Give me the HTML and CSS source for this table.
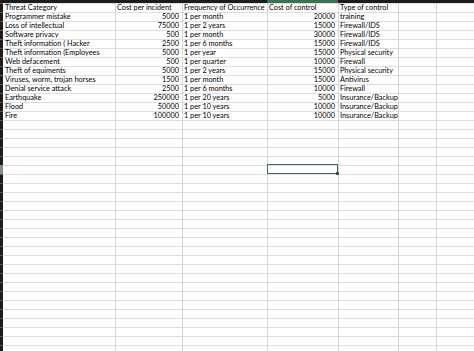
FILE: index.html
```html
<!DOCTYPE html>
<html>
<head>
<meta charset="utf-8">
<link rel="stylesheet" href="styles.css">
</head>
<body>
<div class="app">
  <div class="colheads">
    <span class="corner"></span>
    <span></span><span></span><span></span>
    <span class="hl"></span>
    <span></span><span></span><span></span>
  </div>
  <div class="body">
    <div class="rowheads"><span class="hl"></span></div>
    <div class="sheet">
      <div class="c">Threat Category</div><div class="c">Cost per incident</div><div class="c">Frequency of Occurrence</div><div class="c">Cost of control</div><div class="c">Type of control</div><div class="c"></div><div class="c"></div>
      <div class="c">Programmer mistake</div><div class="c n">5000</div><div class="c">1 per month</div><div class="c n">20000</div><div class="c">training</div><div class="c"></div><div class="c"></div>
      <div class="c">Loss of intellectual</div><div class="c n">75000</div><div class="c">1 per 2 years</div><div class="c n">15000</div><div class="c">Firewall/IDS</div><div class="c"></div><div class="c"></div>
      <div class="c">Software privacy</div><div class="c n">500</div><div class="c">1 per month</div><div class="c n">30000</div><div class="c">Firewall/IDS</div><div class="c"></div><div class="c"></div>
      <div class="c">Theft information ( Hacker</div><div class="c n">2500</div><div class="c">1 per 6 months</div><div class="c n">15000</div><div class="c">Firewall/IDS</div><div class="c"></div><div class="c"></div>
      <div class="c">Theft information (Employees</div><div class="c n">5000</div><div class="c">1 per year</div><div class="c n">15000</div><div class="c">Physical security</div><div class="c"></div><div class="c"></div>
      <div class="c">Web defacement</div><div class="c n">500</div><div class="c">1 per quarter</div><div class="c n">10000</div><div class="c">Firewall</div><div class="c"></div><div class="c"></div>
      <div class="c">Theft of equiments</div><div class="c n">5000</div><div class="c">1 per 2 years</div><div class="c n">15000</div><div class="c">Physical security</div><div class="c"></div><div class="c"></div>
      <div class="c">Viruses, worm, trojan horses</div><div class="c n">1500</div><div class="c">1 per month</div><div class="c n">15000</div><div class="c">Antivirus</div><div class="c"></div><div class="c"></div>
      <div class="c">Denial service attack</div><div class="c n">2500</div><div class="c">1 per 6 months</div><div class="c n">10000</div><div class="c">Firewall</div><div class="c"></div><div class="c"></div>
      <div class="c">Earthquake</div><div class="c n">250000</div><div class="c">1 per 20 years</div><div class="c n">5000</div><div class="c">Insurance/Backup</div><div class="c"></div><div class="c"></div>
      <div class="c">Flood</div><div class="c n">50000</div><div class="c">1 per 10 years</div><div class="c n">10000</div><div class="c">Insurance/Backup</div><div class="c"></div><div class="c"></div>
      <div class="c">Fire</div><div class="c n">100000</div><div class="c">1 per 10 years</div><div class="c n">10000</div><div class="c">Insurance/Backup</div><div class="c"></div><div class="c"></div>
      <div class="sel"></div>
    </div>
  </div>
</div>
</body>
</html>
```

FILE: styles.css
```css
html, body {
  margin: 0;
  padding: 0;
  background: #ffffff;
}

.app {
  width: 474px;
  height: 351px;
  overflow: hidden;
  display: flex;
  flex-direction: column;
  font-family: Lato, "Liberation Sans", Arial, sans-serif;
  font-size: 7.3px;
  color: #000000;
}

.colheads {
  height: 3px;
  flex: none;
  display: grid;
  grid-template-columns: 3px 112px 67px 85px 71px 60px 38px 1fr;
  background: #1c1c1c;
}

.colheads .hl {
  background: #3f6f52;
}

.body {
  flex: 1;
  display: flex;
}

.rowheads {
  width: 3px;
  flex: none;
  display: grid;
  grid-template-rows: repeat(18, 9px) 9px;
  background:
    repeating-linear-gradient(to bottom, #5a5a5a 0 1px, #1c1c1c 1px 9px);
}

.rowheads .hl {
  grid-row: 19;
  background: #7d8f84;
}

.sheet {
  flex: 1;
  display: grid;
  grid-template-columns: 112px 67px 85px 71px 60px 38px 1fr;
  grid-auto-rows: 9px;
  align-content: start;
  background-color: #ffffff;
  background-image:
    linear-gradient(#d4d4d4, #d4d4d4),
    linear-gradient(#d4d4d4, #d4d4d4),
    linear-gradient(#d4d4d4, #d4d4d4),
    linear-gradient(#d4d4d4, #d4d4d4),
    linear-gradient(#d4d4d4, #d4d4d4),
    linear-gradient(#d4d4d4, #d4d4d4),
    repeating-linear-gradient(to bottom, #dedede 0 1px, transparent 1px 9px);
  background-size: 1px 100%, 1px 100%, 1px 100%, 1px 100%, 1px 100%, 1px 100%, 100% 100%;
  background-position: 112px 0, 179px 0, 264px 0, 335px 0, 395px 0, 433px 0, 0 0;
  background-repeat: no-repeat;
}

.c {
  padding: 1px 2px 0 2px;
  line-height: 8px;
  white-space: nowrap;
  overflow: hidden;
}

.n {
  text-align: right;
  padding-right: 3px;
}

.sel {
  grid-row: 19;
  grid-column: 4;
  margin: -1px 0 0 0;
  border: 1px solid #3d6e50;
  position: relative;
}

.sel::after {
  content: "";
  position: absolute;
  right: -2px;
  bottom: -2px;
  width: 3px;
  height: 3px;
  background: #2f5f42;
}
```
